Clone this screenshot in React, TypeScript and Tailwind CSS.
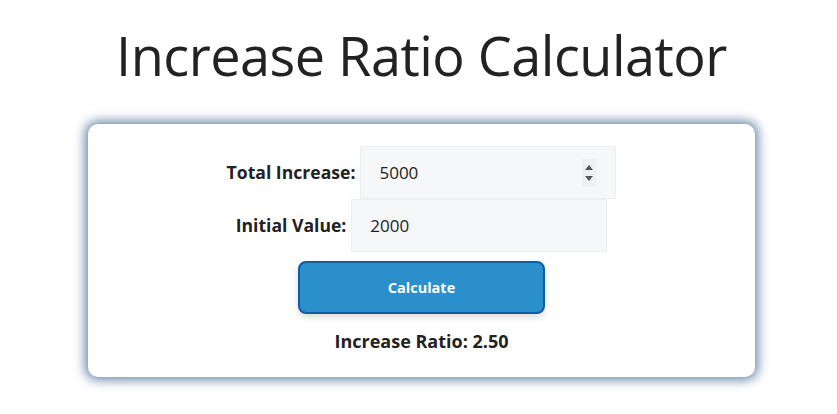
import { useState } from 'react';

function Spinner() {
  return (
    <div className="absolute right-[20px] top-1/2 -translate-y-1/2 flex h-[28px] w-[14px] flex-col items-center justify-center gap-[6px] bg-[#eef0f2]">
      <svg width="8" height="5" viewBox="0 0 8 5">
        <path d="M4 0 L8 5 L0 5 Z" fill="#555" />
      </svg>
      <svg width="8" height="5" viewBox="0 0 8 5">
        <path d="M0 0 L8 0 L4 5 Z" fill="#555" />
      </svg>
    </div>
  );
}

function Field({ label, value, onChange, spinner }: { label: string; value: string; onChange: (v: string) => void; spinner?: boolean }) {
  return (
    <div className="flex items-center justify-center">
      <label className="mr-[5px] text-[17.6px] font-bold text-[#222]">{label}</label>
      <div className="relative">
        <input
          type="text"
          value={value}
          onChange={(e) => onChange(e.target.value)}
          className="h-[53px] w-[256px] border border-[#eceef0] bg-[#f6f7f9] pl-[18px] text-[17px] text-[#222] outline-none"
        />
        {spinner && <Spinner />}
      </div>
    </div>
  );
}

export default function App() {
  const [total, setTotal] = useState('5000');
  const [initial, setInitial] = useState('2000');
  const [ratio, setRatio] = useState('2.50');

  const calculate = () => {
    const t = parseFloat(total);
    const i = parseFloat(initial);
    if (!isNaN(t) && !isNaN(i) && i !== 0) setRatio((t / i).toFixed(2));
  };

  return (
    <div className="flex min-h-[414px] flex-col items-center bg-white pl-[6px] font-['Open_Sans',sans-serif] text-[#222]">
      <h1 className="mt-[22px] text-[54px] font-normal leading-[66px] tracking-[-0.5px] text-[#222]">Increase Ratio Calculator</h1>
      <div className="mt-[36px] flex w-[667px] flex-col items-center rounded-[10px] bg-white pt-[22px] pb-[22px] shadow-[0_0_11px_3px_rgba(70,105,150,0.8)]">
        <Field label="Total Increase:" value={total} onChange={setTotal} spinner />
        <Field label="Initial Value:" value={initial} onChange={setInitial} />
        <button
          onClick={calculate}
          className="mt-[9px] h-[53px] w-[247px] rounded-[8px] border-2 border-[#0d5ea6] bg-[#2a8fca] text-[14.5px] font-bold text-white shadow-[0_3px_6px_rgba(0,0,0,0.15)]"
        >
          Calculate
        </button>
        <p className="mt-[14px] text-[18px] font-bold text-[#222]">Increase Ratio: {ratio}</p>
      </div>
    </div>
  );
}
